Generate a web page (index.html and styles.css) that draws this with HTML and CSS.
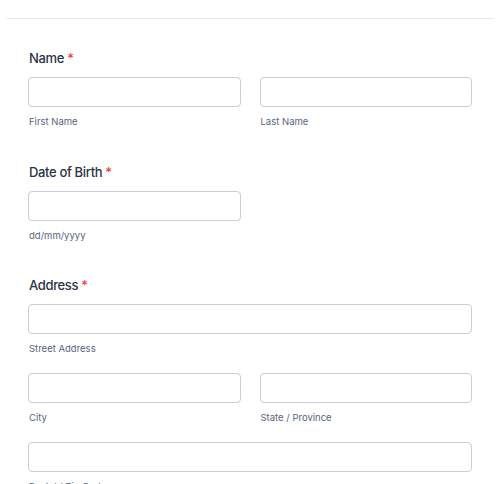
FILE: index.html
```html
<!DOCTYPE html>
<html lang="en">
<head>
  <meta charset="UTF-8" />
  <meta name="viewport" content="width=device-width, initial-scale=1.0"/>
  <title>Registration Form</title>
  <link rel="stylesheet" href="styles.css">
</head>
<body>
  <div class="top-rule"></div>

  <form class="form">
    <div class="field">
      <label class="field-label">Name <span class="req">*</span></label>
      <div class="row">
        <div class="cell">
          <input type="text" class="input" />
          <span class="sub-label">First Name</span>
        </div>
        <div class="cell">
          <input type="text" class="input" />
          <span class="sub-label">Last Name</span>
        </div>
      </div>
    </div>

    <div class="field">
      <label class="field-label">Date of Birth <span class="req">*</span></label>
      <div class="row">
        <div class="cell">
          <input type="text" class="input" />
          <span class="sub-label">dd/mm/yyyy</span>
        </div>
      </div>
    </div>

    <div class="field">
      <label class="field-label">Address <span class="req">*</span></label>
      <div class="cell">
        <input type="text" class="input" />
        <span class="sub-label">Street Address</span>
      </div>
      <div class="row">
        <div class="cell">
          <input type="text" class="input" />
          <span class="sub-label">City</span>
        </div>
        <div class="cell">
          <input type="text" class="input" />
          <span class="sub-label">State / Province</span>
        </div>
      </div>
      <div class="cell">
        <input type="text" class="input" />
        <span class="sub-label">Postal / Zip Code</span>
      </div>
    </div>
  </form>
</body>
</html>
```

FILE: styles.css
```css
body {
  font-family: Inter, 'Noto Sans', sans-serif;
  background: #fff;
  margin: 0;
  color: #2c3345;
}

.top-rule {
  height: 18px;
  margin: 0 6px;
  border-bottom: 1px solid #e6e8ef;
}

.form {
  padding: 30px 28px 0;
}

.field {
  margin-bottom: 33.5px;
}

.field-label {
  display: block;
  padding-left: 1px;
  font-size: 13px;
  line-height: 18px;
  font-weight: 500;
  letter-spacing: -0.35px;
  margin-bottom: 10px;
}

.req {
  color: #f23a3c;
}

.row {
  display: grid;
  grid-template-columns: 1fr 1fr;
  gap: 19px;
}

.cell {
  display: flex;
  flex-direction: column;
  margin-bottom: 17px;
}

.field .cell:last-child,
.field .row:last-child .cell {
  margin-bottom: 0;
}

.input {
  box-sizing: border-box;
  height: 30px;
  width: 100%;
  margin: 0;
  border: 1px solid #c8ccdb;
  border-radius: 4px;
  background: #fff;
  font: inherit;
}

.sub-label {
  margin-top: 8px;
  padding-left: 1px;
  font-size: 9.5px;
  line-height: 14px;
  color: #57647e;
}
```
